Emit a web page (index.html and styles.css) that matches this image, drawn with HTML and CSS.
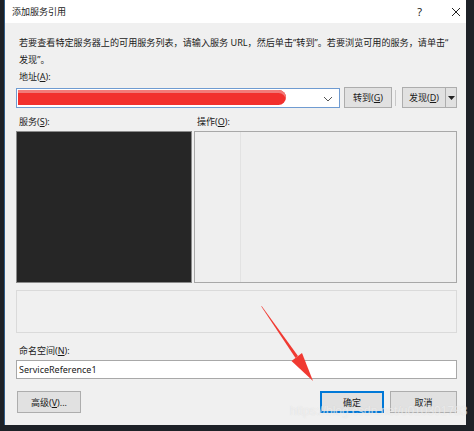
FILE: index.html
```html
<!DOCTYPE html>
<html lang="zh-CN">
  <head>
    <meta charset="UTF-8" />
    <meta name="viewport" content="width=device-width, initial-scale=1.0" />
    <title>添加服务引用</title>
    <link rel="stylesheet" href="styles.css">
  </head>
  <body>
    <div class="dialog">
      <div class="titlebar">
        <span class="title">添加服务引用</span>
        <span class="help">?</span>
        <svg class="close" width="10" height="10" viewBox="0 0 10 10">
          <path d="M1 1 L9 9 M9 1 L1 9" stroke="#222" stroke-width="1" fill="none" />
        </svg>
      </div>

      <div class="content">
        <p class="hint">若要查看特定服务器上的可用服务列表，请输入服务 URL，然后单击“转到”。若要浏览可用的服务，请单击“<br>发现”。</p>

        <p class="label">地址(<u>A</u>):</p>
        <div class="address-row">
          <div class="combo">
            <div class="scribble"></div>
            <svg class="chevron" width="10" height="6" viewBox="0 0 10 6">
              <path d="M1 1 L5 5 L9 1" stroke="#555" stroke-width="1" fill="none" />
            </svg>
          </div>
          <button class="btn go-btn">转到(<u>G</u>)</button>
          <span class="sep"></span>
          <div class="split">
            <button class="btn find-btn">发现(<u>D</u>)</button>
            <button class="btn drop-btn">
              <svg width="7" height="4" viewBox="0 0 7 4"><path d="M0 0 H7 L3.5 4 Z" fill="#222" /></svg>
            </button>
          </div>
        </div>

        <div class="panel-labels">
          <p class="label">服务(<u>S</u>):</p>
          <p class="label">操作(<u>O</u>):</p>
        </div>
        <div class="panels">
          <div class="services"></div>
          <div class="operations">
            <div class="op-col"></div>
          </div>
        </div>

        <div class="status"></div>

        <p class="label ns-label">命名空间(<u>N</u>):</p>
        <div class="textbox">ServiceReference1</div>

        <div class="actions">
          <button class="btn act-btn">高级(<u>V</u>)...</button>
          <div class="right-actions">
            <button class="btn act-btn ok-btn">确定</button>
            <button class="btn act-btn cancel-btn">取消</button>
          </div>
        </div>
      </div>
    </div>

    <!-- annotation arrow pointing at the OK button -->
    <svg class="arrow" width="474" height="431" viewBox="0 0 474 431">
      <polygon points="261,306 262,306.5 298,356 295.5,358" fill="#f03a32" />
      <polygon points="313,381 302,353 291.5,361" fill="#f03a32" />
    </svg>

    <div class="watermark">https://blog.csdn.net/u010301783</div>
  </body>
</html>
```

FILE: styles.css
```css
body {
  margin: 0;
  width: 474px;
  height: 431px;
  overflow: hidden;
  background-color: #1d2127;
  font-family: "Noto Sans", "Noto Sans CJK SC", sans-serif;
  font-size: 9px;
  color: #1a1a1a;
  position: relative;
}
p {
  margin: 0;
}
u {
  text-decoration: underline;
  text-underline-offset: 1px;
}
.dialog {
  margin-left: 5px;
  width: 461px;
  height: 425px;
  background-color: #f0f0f0;
  box-shadow: -1px 0 0 #2f5d8a;
}
.titlebar {
  height: 23px;
  background-color: #fff;
  display: flex;
  align-items: center;
  padding: 0 5px 0 7px;
}
.title {
  flex: 1;
  color: #222;
}
.help {
  margin-right: 29px;
  font-size: 11px;
  color: #222;
}
.content {
  padding: 11px 9px 0 11px;
}
.hint {
  padding: 0 0 0 3px;
  font-size: 9.1px;
  line-height: 17px;
  white-space: nowrap;
}
.label {
  padding: 0 3px;
  line-height: 17px;
}
.address-row {
  display: flex;
  align-items: center;
  margin-top: 2px;
  height: 21px;
}
.combo {
  position: relative;
  width: 323px;
  height: 18px;
  background-color: #fff;
  border: 1px solid #6f9bd1;
}
.scribble {
  position: absolute;
  left: 1px;
  top: 1px;
  width: 268px;
  height: 15px;
  background-color: #f2302d;
  border-radius: 0 8px 8px 0;
  box-shadow: inset 0 3px 0 #f27a78;
}
.chevron {
  position: absolute;
  right: 6px;
  top: 7px;
}
.btn {
  font-family: inherit;
  font-size: 9px;
  color: #1a1a1a;
  background-color: #e1e1e1;
  border: 1px solid #adadad;
  padding: 0;
  height: 21px;
}
.go-btn {
  margin-left: 4px;
  width: 48px;
}
.sep {
  width: 1px;
  height: 16px;
  margin: 0 6px 0 3px;
  background-color: #c8c8c8;
}
.split {
  display: flex;
}
.find-btn {
  width: 44px;
}
.drop-btn {
  width: 11px;
  border-left: none;
  display: flex;
  align-items: center;
  justify-content: center;
}
.panel-labels {
  display: grid;
  grid-template-columns: 178px 1fr;
  margin-top: 5px;
}
.panels {
  display: grid;
  grid-template-columns: 176px 1fr;
  gap: 2px;
  margin-top: 1px;
  height: 152px;
}
.services {
  background-color: #262626;
  border: 1px solid #8a8a8a;
}
.operations {
  background-color: #eeeeee;
  border: 1px solid #a8a8a8;
  display: flex;
}
.op-col {
  width: 45px;
  border-right: 1px solid #e2e2e2;
  background-color: #efefef;
}
.status {
  margin-top: 7px;
  height: 41px;
  border: 1px solid #dadada;
}
.ns-label {
  margin-top: 9px;
}
.textbox {
  margin-top: 1px;
  height: 17px;
  line-height: 17px;
  padding: 0 2px;
  background-color: #fff;
  border: 1px solid #a8a8a8;
}
.actions {
  display: flex;
  justify-content: space-between;
  margin-top: 12px;
  padding-left: 1px;
}
.right-actions {
  display: flex;
  gap: 6px;
}
.act-btn {
  width: 64px;
  height: 22px;
}
.ok-btn {
  border: 1px solid #0078d7;
  box-shadow: inset 0 0 0 1px #0078d7;
}
.cancel-btn {
  width: 67px;
}
.arrow {
  position: absolute;
  left: 0;
  top: 0;
  pointer-events: none;
}
.watermark {
  position: absolute;
  left: 290px;
  top: 404px;
  font-family: "Liberation Sans", sans-serif;
  font-size: 12px;
  color: rgba(255, 255, 255, 0.5);
  text-shadow: 0 0 1px rgba(200, 200, 200, 0.6);
  white-space: nowrap;
  pointer-events: none;
}
```
